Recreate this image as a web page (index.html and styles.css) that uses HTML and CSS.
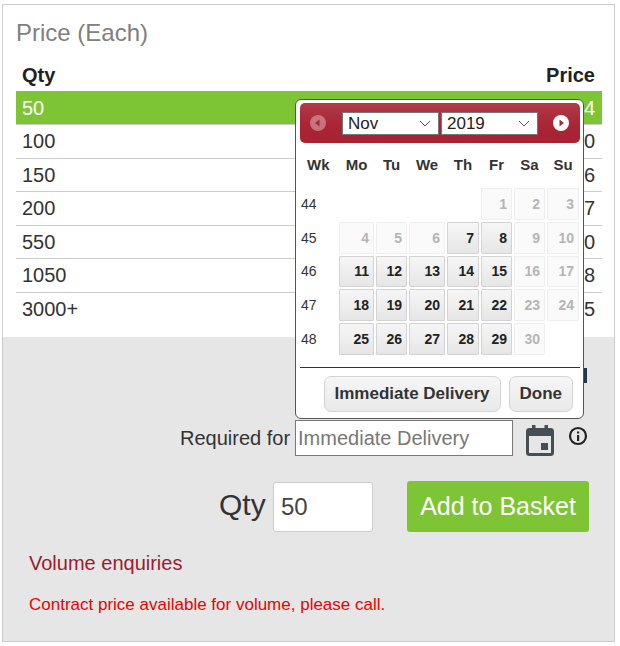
FILE: index.html
```html
<!DOCTYPE html>
<html lang="en">
<head>
<meta charset="utf-8">
<title>Price</title>
<link rel="stylesheet" href="styles.css">
</head>
<body>
<div class="box">
  <section class="prices">
    <h2 class="title">Price (Each)</h2>
    <table class="price-table">
      <thead><tr><th class="left">Qty</th><th class="right">Price</th></tr></thead>
      <tbody>
        <tr class="active"><td>50</td><td class="right">4</td></tr>
        <tr><td>100</td><td class="right">0</td></tr>
        <tr><td>150</td><td class="right">6</td></tr>
        <tr><td>200</td><td class="right">7</td></tr>
        <tr><td>550</td><td class="right">0</td></tr>
        <tr><td>1050</td><td class="right">8</td></tr>
        <tr><td>3000+</td><td class="right">5</td></tr>
      </tbody>
    </table>
  </section>
  <section class="order">
    <div class="mark-row"><span class="mark"></span></div>
    <div class="req-row">
      <label class="req-label" for="req">Required for</label>
      <input class="req-input" id="req" placeholder="Immediate Delivery">
      <svg class="cal-icon" viewBox="0 0 28 31" aria-hidden="true"><path fill="#454d55" d="M6 0h3.500v3h9V0H22v3h2.500A3.500 3.500 0 0 1 28 6.500v21a3.500 3.500 0 0 1-3.500 3.500h-21A3.500 3.500 0 0 1 0 27.500v-21A3.500 3.500 0 0 1 3.500 3H6zM3 11v16.500a.5.500 0 0 0 .5.500h21a.5.500 0 0 0 .5-.500V11zM15 18h7v7h-7z"/></svg>
      <svg class="info-icon" viewBox="0 0 20 20" aria-hidden="true"><circle cx="10" cy="10" r="8" fill="none" stroke="#222" stroke-width="2.200"/><rect x="9" y="9" width="2.200" height="6" fill="#222"/><rect x="9" y="5.500" width="2.200" height="2" fill="#222"/></svg>
    </div>
    <div class="buy-row">
      <label class="qty-label" for="qty">Qty</label>
      <input class="qty-input" id="qty" value="50">
      <button class="basket" type="button">Add to Basket</button>
    </div>
    <h3 class="enquiries">Volume enquiries</h3>
    <p class="contract">Contract price available for volume, please call.</p>
  </section>

  <div class="picker">
    <div class="picker-head">
      <svg class="nav nav-prev" viewBox="0 0 16 16" aria-hidden="true"><circle cx="8" cy="8" r="8" fill="#fff"/><path d="M9.500 4.500v7L5 8z" fill="#a82636"/></svg>
      <div class="selects">
        <select class="sel"><option>Nov</option></select>
        <select class="sel"><option>2019</option></select>
      </div>
      <svg class="nav" viewBox="0 0 16 16" aria-hidden="true"><circle cx="8" cy="8" r="8" fill="#fff"/><path d="M6.500 4.500v7L11 8z" fill="#a82636"/></svg>
    </div>
    <div class="cal">
      <div class="dow wk">Wk</div><div class="dow">Mo</div><div class="dow">Tu</div><div class="dow">We</div><div class="dow">Th</div><div class="dow">Fr</div><div class="dow">Sa</div><div class="dow">Su</div>

      <div class="wkn">44</div><div></div><div></div><div></div><div></div><div class="d off">1</div><div class="d off">2</div><div class="d off">3</div>
      <div class="wkn">45</div><div class="d off">4</div><div class="d off">5</div><div class="d off">6</div><div class="d">7</div><div class="d">8</div><div class="d off">9</div><div class="d off">10</div>
      <div class="wkn">46</div><div class="d">11</div><div class="d">12</div><div class="d">13</div><div class="d">14</div><div class="d">15</div><div class="d off">16</div><div class="d off">17</div>
      <div class="wkn">47</div><div class="d">18</div><div class="d">19</div><div class="d">20</div><div class="d">21</div><div class="d">22</div><div class="d off">23</div><div class="d off">24</div>
      <div class="wkn">48</div><div class="d">25</div><div class="d">26</div><div class="d">27</div><div class="d">28</div><div class="d">29</div><div class="d off">30</div><div></div>
    </div>
    <div class="picker-foot">
      <button class="pbtn" type="button">Immediate Delivery</button>
      <button class="pbtn" type="button">Done</button>
    </div>
  </div>
</div>
</body>
</html>
```
FILE: styles.css
```css
* { box-sizing: border-box; }
html, body { margin: 0; padding: 0; background: #fff; }
body { font-family: "Liberation Sans", Arial, sans-serif; color: #333; padding: 4px 5px 0 2px; }
.box { position: relative; width: 613px; height: 638px; border: 1px solid #ccc; display: flex; flex-direction: column; }
.prices { height: 332px; padding: 0 12px 0 13px; background: #fff; }
.title { margin: 0; padding-top: 14px; height: 54px; font-size: 24px; line-height: 27px; font-weight: 400; color: #808080; }
.price-table { width: 586px; border-collapse: collapse; font-size: 20px; color: #333; }
.price-table th { height: 32px; padding: 0 7px 0 6px; font-size: 20px; font-weight: 700; line-height: 22px; color: #222; }
.price-table td { height: 33.5px; padding: 0 7px 0 6px; border-top: 1px solid #ccc; line-height: 22px; }
.price-table .left { text-align: left; }
.price-table .right { text-align: right; }
.price-table .active td { background: #7dc535; color: #fff; border-top: 0; }
.order { flex: 1; background: #e6e6e6; padding: 0 25px 0 26px; }
.mark-row { height: 83px; display: flex; justify-content: flex-end; padding: 31px 0 0; }
.mark { width: 4px; height: 15px; background: #24364f; margin-right: 2px; }
.req-row { display: flex; align-items: center; height: 36px; justify-content: flex-start; padding-left: 151px; }
.req-label { font-size: 20px; color: #333; margin-right: 5px; white-space: nowrap; }
.req-input { width: 218px; height: 36px; border: 1px solid #777; background: #fff; padding: 0 2px; font: 20px "Liberation Sans", Arial, sans-serif; color: #333; border-radius: 0; }
.req-input::placeholder { color: #777; opacity: 1; }
.cal-icon { width: 28px; height: 31px; margin-left: 13px; margin-top: 4px; flex: none; }
.info-icon { width: 20px; height: 20px; margin-left: 14px; margin-top: -4px; flex: none; }
.buy-row { display: flex; align-items: center; margin-top: 25px; height: 51px; padding-left: 190px; }
.qty-label { font-size: 30px; color: #333; margin-right: 8px; margin-top: -4px; width: 46px; }
.qty-input { width: 100px; height: 50px; border: 1px solid #ccc; border-radius: 3px; background: #fff; padding: 0 7px; font: 24px "Liberation Sans", Arial, sans-serif; color: #444; }
.basket { width: 182px; height: 51px; margin-left: 34px; border: 0; border-radius: 3px; background: #7dc535; color: #fff; font: 25px "Liberation Sans", Arial, sans-serif; padding: 0; }
.enquiries { margin: 19px 0 0; font-size: 20px; line-height: 24px; font-weight: 400; color: #9b1c2e; }
.contract { margin: 19px 0 0; font-size: 17px; line-height: 22px; color: #ee0000; }

.picker { position: absolute; left: 292px; top: 94px; width: 289px; height: 320px; background: #fff; border: 1px solid #555; border-radius: 6px; padding: 3px 3px 3px 4px; }
.picker-head { width: 280px; height: 40px; border-radius: 5px; background: linear-gradient(#b23a48, #a82636 55%, #a82232); display: flex; align-items: center; padding: 0 11px 0 10px; justify-content: space-between; }
.nav { width: 16px; height: 16px; flex: none; }
.nav-prev { opacity: .35; }
.selects { display: flex; gap: 2px; margin-left: 1px; }
.sel { appearance: none; width: 97px; height: 23px; border: 1px solid #777; font: 17px "Liberation Sans", Arial, sans-serif; color: #222; padding: 0 0 0 5px; border-radius: 0;
  background: #fff url("data:image/svg+xml,%3Csvg xmlns='http://www.w3.org/2000/svg' width='12' height='7'%3E%3Cpath d='M1 1l5 5 5-5' fill='none' stroke='%23555' stroke-width='1'/%3E%3C/svg%3E") no-repeat right 7px center; }
.cal { display: grid; grid-template-columns: 37px 35px 31px 36px 32px 31px 31px 32px; grid-template-rows: 43px repeat(5, 31.750px); column-gap: 2px; row-gap: 2px; }
.dow { font-size: 15px; font-weight: 700; color: #333; display: flex; align-items: center; justify-content: center; }
.dow.wk { justify-content: flex-start; padding-left: 7px; }
.wkn { font-size: 14px; color: #333; display: flex; align-items: center; padding-left: 1px; }
.d { border: 1px solid #d3d3d3; background: linear-gradient(#f6f6f6, #e6e6e6); font-size: 14px; font-weight: 700; color: #222; display: flex; align-items: center; justify-content: flex-end; padding-right: 4px; border-radius: 1px; }
.d.off { border-color: #eee; background: #fafafa; color: #b5b5b5; }
.picker-foot { width: 280px; margin-top: 12px; border-top: 1px solid #333; padding: 8px 7px 0 0; display: flex; justify-content: flex-end; gap: 8px; }
.pbtn { height: 36px; padding: 0 10px; border: 1px solid #d3d3d3; border-radius: 7px; background: linear-gradient(#f6f6f6, #e9e9e9); font: 700 17px "Liberation Sans", Arial, sans-serif; color: #333; }
```
